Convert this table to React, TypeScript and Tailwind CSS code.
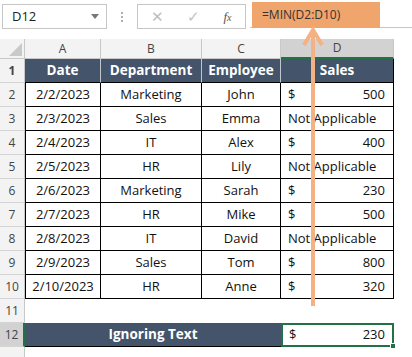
import React from 'react'

type Row = [string, string, string, string | number]

const rows: Row[] = [
  ['2/2/2023', 'Marketing', 'John', 500],
  ['2/3/2023', 'Sales', 'Emma', 'Not Applicable'],
  ['2/4/2023', 'IT', 'Alex', 400],
  ['2/5/2023', 'HR', 'Lily', 'Not Applicable'],
  ['2/6/2023', 'Marketing', 'Sarah', 230],
  ['2/7/2023', 'HR', 'Mike', 500],
  ['2/8/2023', 'IT', 'David', 'Not Applicable'],
  ['2/9/2023', 'Sales', 'Tom', 800],
  ['2/10/2023', 'HR', 'Anne', 320],
]

function RowHead({ n, active }: { n?: number; active?: boolean }) {
  return (
    <div
      className={`w-[25px] shrink-0 flex items-center justify-center text-[12px] text-[#444] border-b border-[#d4d4d4] ${
        active ? 'bg-[#d2d2d2] border-r-2 border-r-[#217346]' : 'bg-[#f3f3f3] border-r border-r-[#c8c8c8]'
      }`}
    >
      {n}
    </div>
  )
}

function SalesCell({ value }: { value: string | number }) {
  if (typeof value === 'string') {
    return <span className="pl-[7px]">{value}</span>
  }
  return (
    <div className="flex w-full justify-between pl-[7px] pr-[8px]">
      <span>$</span>
      <span>{value}</span>
    </div>
  )
}

export default function App() {
  return (
    <div className="relative w-[412px] h-[357px] overflow-hidden bg-white font-['Open_Sans',sans-serif] text-[#111]">
      {/* Formula bar */}
      <div className="h-[39px] flex items-start pt-[4px] pl-[2px]">
        <div className="w-[105px] h-[25px] border border-[#c6c6c6] bg-white flex items-center justify-between pl-[9px] pr-[7px] text-[13px] text-[#222]">
          <span>D12</span>
          <svg width="8" height="5" viewBox="0 0 8 5">
            <path d="M0 0 L8 0 L4 5 Z" fill="#777" />
          </svg>
        </div>
        <div className="w-[30px] h-[25px] flex flex-col items-center justify-center gap-[2px]">
          <span className="w-[2px] h-[2px] bg-[#b0b0b0]" />
          <span className="w-[2px] h-[2px] bg-[#b0b0b0]" />
          <span className="w-[2px] h-[2px] bg-[#b0b0b0]" />
        </div>
        <div className="w-[109px] h-[25px] border border-[#c6c6c6] bg-white flex items-center">
          <span className="w-[38px] text-center text-[15px] text-[#bdbdbd]">✕</span>
          <span className="w-[34px] text-center text-[15px] text-[#c4c4c4]">✓</span>
          <span className="flex-1 text-center text-[13px] italic text-[#555] font-['Liberation_Serif',serif]">
            f<span className="text-[10px]">x</span>
          </span>
        </div>
        <div className="ml-[4px] flex-1 h-[26px] -mt-[2px] border-b border-[#c6c6c6] bg-white flex">
          <div className="ml-[2px] w-[128px] h-[26px] bg-[#f0a56d] flex items-center pl-[10px] text-[12px] text-[#333]">
            =MIN(D2:D10)
          </div>
        </div>
      </div>

      {/* Column headers */}
      <div className="flex h-[20px] text-[12px] text-[#444]">
        <div className="w-[25px] shrink-0 bg-[#f3f3f3] border-r border-b border-[#c8c8c8] flex items-end justify-end p-[2px]">
          <svg width="13" height="13" viewBox="0 0 13 13">
            <path d="M13 0 L13 13 L0 13 Z" fill="#c9c9c9" />
          </svg>
        </div>
        <div className="w-[76px] shrink-0 bg-[#f3f3f3] border-r border-b border-[#c8c8c8] flex items-center justify-center">A</div>
        <div className="w-[101px] shrink-0 bg-[#f3f3f3] border-r border-b border-[#c8c8c8] flex items-center justify-center">B</div>
        <div className="w-[79px] shrink-0 bg-[#f3f3f3] border-r border-b border-[#c8c8c8] flex items-center justify-center">C</div>
        <div className="w-[113px] shrink-0 bg-[#d2d2d2] border-r border-r-[#c8c8c8] border-b-2 border-b-[#217346] flex items-center justify-center">D</div>
        <div className="flex-1 bg-white" />
      </div>

      {/* Row 1: table header */}
      <div className="flex h-[24px] text-[13.5px] font-bold text-white">
        <RowHead n={1} />
        <div className="w-[76px] shrink-0 bg-[#44546a] border-r border-r-[#c0c6ce] border-b border-b-black flex items-center justify-center">Date</div>
        <div className="w-[101px] shrink-0 bg-[#44546a] border-r border-r-[#c0c6ce] border-b border-b-black flex items-center justify-center">Department</div>
        <div className="w-[79px] shrink-0 bg-[#44546a] border-r border-r-[#c0c6ce] border-b border-b-black flex items-center justify-center">Employee</div>
        <div className="w-[113px] shrink-0 bg-[#44546a] border-r border-r-black border-b border-b-black flex items-center justify-center">Sales</div>
      </div>

      {/* Data rows */}
      {rows.map((r, i) => (
        <div key={i} className="flex h-[24px] text-[13px]">
          <RowHead n={i + 2} />
          <div className="w-[76px] shrink-0 border-l border-r border-b border-black flex items-center justify-center">{r[0]}</div>
          <div className="w-[101px] shrink-0 border-r border-b border-black flex items-center justify-center">{r[1]}</div>
          <div className="w-[79px] shrink-0 border-r border-b border-black flex items-center justify-center">{r[2]}</div>
          <div className="w-[113px] shrink-0 border-r border-b border-black flex items-center">
            <SalesCell value={r[3]} />
          </div>
        </div>
      ))}

      {/* Row 11 */}
      <div className="flex h-[24px]">
        <RowHead n={11} />
      </div>

      {/* Row 12: result */}
      <div className="flex h-[24px] text-[13px]">
        <RowHead n={12} active />
        <div className="w-[256px] shrink-0 bg-[#44546a] border-b border-black flex items-center justify-center text-[13.5px] font-bold text-white">
          Ignoring Text
        </div>
        <div className="relative w-[113px] shrink-0 border-2 border-[#217346] flex items-center">
          <div className="flex w-full justify-between pl-[6px] pr-[7px]">
            <span>$</span>
            <span>230</span>
          </div>
          <span className="absolute -right-[4px] -bottom-[4px] w-[6px] h-[6px] bg-[#217346] border border-white" />
        </div>
      </div>

      {/* Row 13 (cut off) */}
      <div className="flex h-[24px]">
        <RowHead />
      </div>

      {/* Arrow overlay */}
      <svg className="absolute left-0 top-0 pointer-events-none" width="412" height="357" viewBox="0 0 412 357">
        <line x1="313" y1="306" x2="313" y2="31" stroke="#f4b183" strokeWidth="4" />
        <polyline points="304,45 313,30 322,45" fill="none" stroke="#f4b183" strokeWidth="4" strokeLinejoin="miter" />
      </svg>
    </div>
  )
}
